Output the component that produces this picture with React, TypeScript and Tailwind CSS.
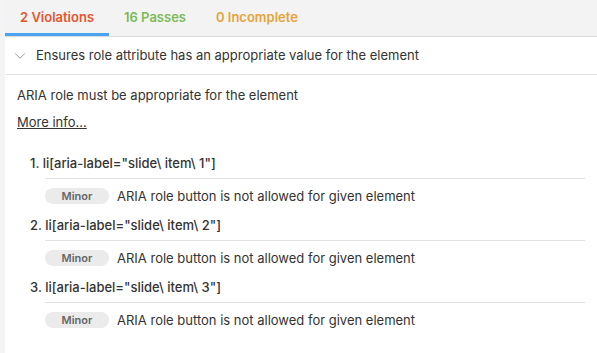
import { ChevronDown } from "lucide-react";

const items = [1, 2, 3];

const Tab = ({ label, color, active }: { label: string; color: string; active?: boolean }) => (
  <div className={`relative flex h-full items-center px-[15px] text-[13px] font-semibold ${color}`}>
    {label}
    {active && <div className="absolute bottom-0 left-0 right-0 h-[3px] bg-[#4ba4f2]" />}
  </div>
);

const App = () => {
  return (
    <div className="flex h-[353px] w-[597px] overflow-hidden bg-white text-[#333] font-['Inter','Liberation_Sans',sans-serif]">
      <div className="w-[5px] shrink-0 bg-[#f4f4f7]" />
      <div className="flex flex-1 flex-col">
        <div className="flex h-[37px] shrink-0 items-stretch border-b border-[#dcdcdc] bg-[#f3f3f3]">
          <Tab label="2 Violations" color="text-[#e8552f]" active />
          <Tab label="16 Passes" color="text-[#7cba55]" />
          <Tab label="0 Incomplete" color="text-[#e6a43a]" />
        </div>
        <div className="flex h-[38px] shrink-0 items-center gap-[7px] border-b border-[#e2e2e2] pl-[6px] text-[13px]">
          <ChevronDown size={18} strokeWidth={1.3} className="text-[#999]" />
          <span>Ensures role attribute has an appropriate value for the element</span>
        </div>
        <div className="shrink-0 px-[12px] pt-[11px] text-[13px]">
          <p>ARIA role must be appropriate for the element</p>
          <a className="mt-[7px] block w-fit underline">More info...</a>
          <ol className="mt-[22px] flex flex-col">
            {items.map((n) => (
              <li key={n} className="flex flex-col">
                <div className="pl-[13px] text-[13px] font-medium">
                  {n}. li[aria-label="slide\ item\ {n}"]
                </div>
                <div className="ml-[28px] mt-[4px] border-t border-[#e2e2e2] pt-[8px] pb-[10px]">
                  <div className="flex items-center gap-[8px]">
                    <span className="flex h-[16px] w-[64px] items-center justify-center rounded-full bg-[#ebebeb] text-[11px] font-semibold text-[#666]">
                      Minor
                    </span>
                    <span>ARIA role button is not allowed for given element</span>
                  </div>
                </div>
              </li>
            ))}
          </ol>
        </div>
      </div>
    </div>
  );
};

export default App;
